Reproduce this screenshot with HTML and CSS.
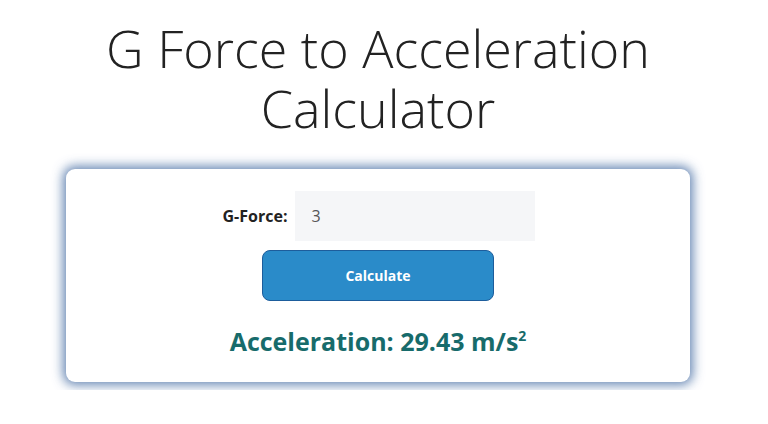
FILE: index.html
```html
<!DOCTYPE html>
<html lang="en">
<head>
    <meta charset="UTF-8">
    <meta name="viewport" content="width=device-width, initial-scale=1.0">
    <title>G Force to Acceleration Calculator</title>
    <link rel="stylesheet" href="styles.css">
</head>
<body>
    <h1>G Force to Acceleration Calculator</h1>

    <div class="calculator">
        <div class="field">
            <label for="gforce">G-Force:</label>
            <input type="number" id="gforce" value="3">
        </div>
        <button class="btn">Calculate</button>
        <div class="result">Acceleration: 29.43 m/s<sup>2</sup></div>
    </div>
</body>
</html>
```

FILE: styles.css
```css
body {
    font-family: "Open Sans", "Noto Sans", sans-serif;
    margin: 0;
    padding: 8px 12px 8px 0;
    background: #fff;
    color: #222;
}
h1 {
    font-weight: 300;
    font-size: 52px;
    line-height: 60px;
    text-align: center;
    margin: 10px auto 0;
    max-width: 620px;
}
.calculator {
    width: 624px;
    box-sizing: border-box;
    margin: 31px auto 0;
    padding: 22px 20px 24px;
    border-radius: 9px;
    background: #fff;
    box-shadow: 0 0 11px 3px rgba(65, 105, 160, 0.8);
    display: flex;
    flex-direction: column;
    align-items: center;
}
.field {
    display: flex;
    align-items: center;
    gap: 8px;
    padding-left: 2px;
}
.field label {
    font-weight: 700;
    font-size: 16px;
    color: #222;
}
.field input {
    width: 240px;
    height: 50px;
    box-sizing: border-box;
    border: none;
    background: #f5f6f8;
    padding: 0 16px;
    font-family: inherit;
    font-size: 16px;
    color: #555;
    outline: none;
}
.btn {
    margin-top: 9px;
    width: 232px;
    height: 51px;
    background: #2a8bc9;
    color: #fff;
    border: 1.5px solid #1d5d9c;
    border-radius: 8px;
    font-family: inherit;
    font-weight: 700;
    font-size: 14px;
}
.result {
    margin-top: 23px;
    font-weight: 700;
    font-size: 25px;
    color: #176b6b;
}
.result sup {
    font-size: 14px;
    vertical-align: 10px;
    line-height: 0;
}
```
